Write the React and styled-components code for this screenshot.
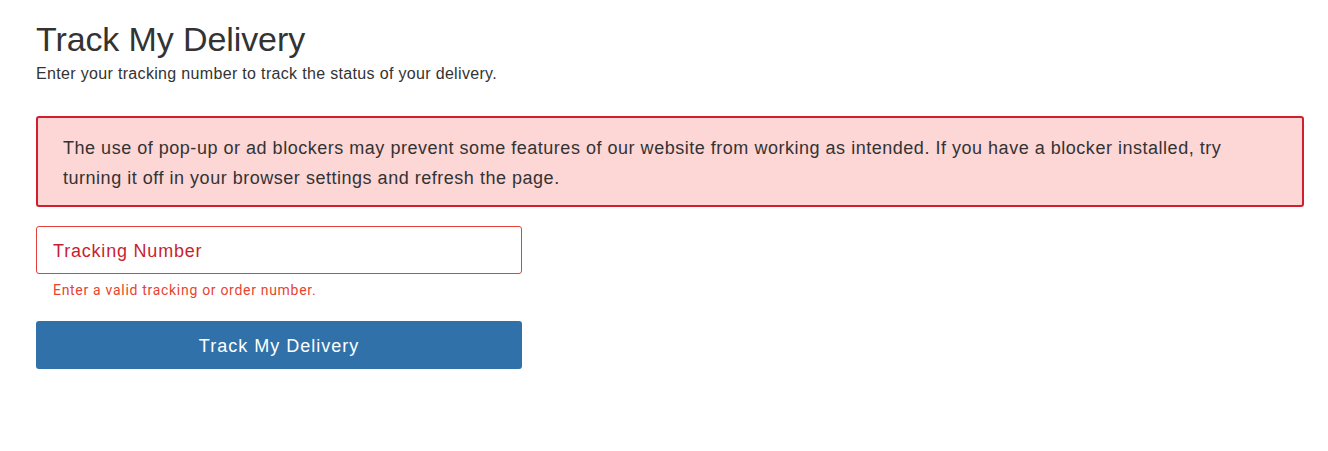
import React, { useState } from 'react'
import styled, { createGlobalStyle } from 'styled-components'

const GlobalStyle = createGlobalStyle`
  body {
    margin: 0;
    background: #fff;
    font-family: 'Liberation Sans', Arial, sans-serif;
    color: #333;
  }
`

const Page = styled.div`
  padding: 19px 24px 40px 36px;
  display: flex;
  flex-direction: column;
`

const Title = styled.h1`
  margin: 0;
  font-size: 34px;
  font-weight: 400;
  line-height: 40px;
  letter-spacing: -0.1px;
  color: #333;
`

const Subtitle = styled.p`
  margin: 4px 0 0;
  font-size: 16px;
  line-height: 22px;
  letter-spacing: 0.33px;
  color: #333;
`

const Alert = styled.div`
  margin-top: 31px;
  padding: 15px 25px 12px;
  background: #fdd6d6;
  border: 2px solid #d21f30;
  border-radius: 3px;
  font-size: 18px;
  line-height: 30px;
  letter-spacing: 0.52px;
  color: #333;
`

const Form = styled.form`
  width: 486px;
  margin-top: 19px;
  display: flex;
  flex-direction: column;
`

const Input = styled.input`
  box-sizing: border-box;
  height: 48px;
  width: 100%;
  padding: 2px 16px 0;
  border: 1px solid ${p => (p.$error ? '#e4403a' : '#ccc')};
  border-radius: 3px;
  font-family: 'Liberation Sans', Arial, sans-serif;
  font-size: 18px;
  letter-spacing: 0.8px;
  color: #333;
  outline: none;
  &::placeholder {
    color: #c81f30;
    opacity: 1;
  }
`

const ErrorText = styled.div`
  margin: 8px 0 0 17px;
  font-family: Roboto, 'Liberation Sans', sans-serif;
  font-size: 14px;
  letter-spacing: 0.7px;
  line-height: 17px;
  color: #e8432f;
`

const Button = styled.button`
  margin-top: 22px;
  height: 48px;
  width: 100%;
  padding: 3px 0 0;
  border: none;
  border-radius: 3px;
  background: #3071a9;
  color: #fff;
  font-family: 'Liberation Sans', Arial, sans-serif;
  font-size: 18px;
  letter-spacing: 1px;
  cursor: pointer;
`

export default function App() {
  const [value, setValue] = useState('')
  return (
    <>
      <GlobalStyle />
      <Page>
        <Title>Track My Delivery</Title>
        <Subtitle>Enter your tracking number to track the status of your delivery.</Subtitle>
        <Alert>
          The use of pop-up or ad blockers may prevent some features of our website from working as intended. If you have a blocker installed, try turning it off in your browser settings and refresh the page.
        </Alert>
        <Form onSubmit={e => e.preventDefault()}>
          <Input
            $error
            type="text"
            placeholder="Tracking Number"
            value={value}
            onChange={e => setValue(e.target.value)}
          />
          <ErrorText>Enter a valid tracking or order number.</ErrorText>
          <Button type="submit">Track My Delivery</Button>
        </Form>
      </Page>
    </>
  )
}
